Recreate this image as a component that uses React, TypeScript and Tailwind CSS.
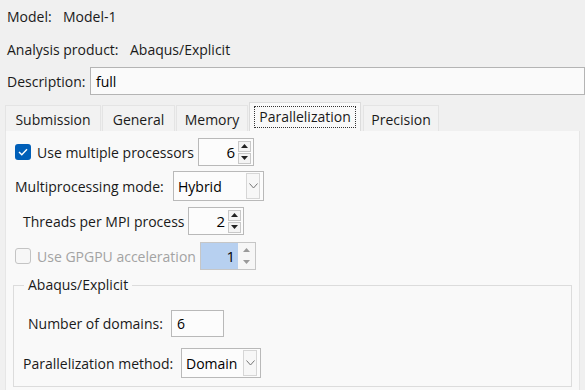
import React from "react"

function Arrows() {
  return (
    <div className="flex flex-col gap-[1px] pr-[2px]">
      <div className="flex h-[11px] w-[13px] items-center justify-center border border-[#c8c8c8] bg-[#f4f4f4]">
        <svg width="7" height="4" viewBox="0 0 7 4"><path d="M0 4 L3.5 0 L7 4 Z" fill="#222" /></svg>
      </div>
      <div className="flex h-[11px] w-[13px] items-center justify-center border border-[#c8c8c8] bg-[#f4f4f4]">
        <svg width="7" height="4" viewBox="0 0 7 4"><path d="M0 0 L3.5 4 L7 0 Z" fill="#222" /></svg>
      </div>
    </div>
  )
}

function DisabledArrows() {
  return (
    <div className="flex h-full flex-col justify-center gap-[1px] bg-[#f6f6f6] px-[2px]">
      <div className="flex h-[11px] w-[13px] items-center justify-center">
        <svg width="7" height="4" viewBox="0 0 7 4"><path d="M0 4 L3.5 0 L7 4 Z" fill="#9a9a9a" /></svg>
      </div>
      <div className="flex h-[11px] w-[13px] items-center justify-center">
        <svg width="7" height="4" viewBox="0 0 7 4"><path d="M0 0 L3.5 4 L7 0 Z" fill="#9a9a9a" /></svg>
      </div>
    </div>
  )
}

function Spin({ value }: { value: string }) {
  return (
    <div className="flex h-[28px] w-[56px] items-center border border-[#b9b9b9] bg-[#fcfcfc]">
      <span className="flex-1 pr-[3px] text-right text-[15px] text-black">{value}</span>
      <Arrows />
    </div>
  )
}

function Combo({ value, width }: { value: string; width: string }) {
  return (
    <div className={`flex h-[30px] items-center border border-[#b9b9b9] bg-[#fcfcfc] ${width}`}>
      <span className="flex-1 pl-[4px] text-black">{value}</span>
      <div className="mr-[3px] flex h-[26px] w-[14px] items-center justify-center border border-[#d6d6d6] bg-[#f7f7f7]">
        <svg width="9" height="6" viewBox="0 0 9 6"><path d="M0.5 0.5 L4.5 5 L8.5 0.5" stroke="#777" strokeWidth="1" fill="none" /></svg>
      </div>
    </div>
  )
}

export default function App() {
  return (
    <div className="h-[390px] w-[585px] overflow-hidden bg-[#f0f0f0] text-[14px] text-[#1a1a1a]" style={{ fontFamily: '"Segoe UI", "Open Sans", sans-serif' }}>
      <div className="flex h-[32px] items-center pl-[7px]">
        <span className="w-[56px]">Model:</span>
        <span>Model-1</span>
      </div>
      <div className="flex h-[34px] items-center pl-[7px]">
        <span className="w-[123px]">Analysis product:</span>
        <span>Abaqus/Explicit</span>
      </div>
      <div className="flex h-[30px] items-center pl-[7px]">
        <span className="w-[83px]">Description:</span>
        <div className="flex h-[28px] flex-1 items-center border border-[#b4b4b4] bg-[#fafafa] pl-[5px] text-black">full</div>
      </div>

      <div className="mt-[7px] flex h-[28px] items-end pl-[5px]">
        <div className="flex h-[26px] w-[96px] items-center justify-center border-x border-t border-[#e4e4e4] bg-[#f2f2f2] pt-[1px]">Submission</div>
        <div className="ml-[1px] flex h-[26px] w-[73px] items-center justify-center border-x border-t border-[#e4e4e4] bg-[#f2f2f2] pt-[1px]">General</div>
        <div className="ml-[1px] flex h-[26px] w-[72px] items-center justify-center border-x border-t border-[#e4e4e4] bg-[#f2f2f2] pt-[1px]">Memory</div>
        <div className="ml-[1px] flex h-[29px] w-[112px] items-center justify-center border-x border-t border-[#dcdcdc] bg-[#f9f9f9]">
          <span className="border border-dotted border-[#333] px-[4px] leading-[20px]">Parallelization</span>
        </div>
        <div className="ml-[2px] flex h-[26px] w-[76px] items-center justify-center border-x border-t border-[#e4e4e4] bg-[#f2f2f2] pt-[1px]">Precision</div>
      </div>

      <div className="ml-[5px] mr-[5px] h-[259px] border-x border-[#e6e6e6] bg-[#f9f9f9]">
        <div className="flex items-center pl-[9px] pt-[7px]">
          <div className="flex h-[16px] w-[16px] items-center justify-center rounded-[3px] bg-[#005fb8]">
            <svg width="10" height="8" viewBox="0 0 10 8"><path d="M1 4 L3.8 6.8 L9 1.2" stroke="#fff" strokeWidth="1.4" fill="none" /></svg>
          </div>
          <span className="ml-[6px] w-[161px]">Use multiple processors</span>
          <Spin value="6" />
        </div>

        <div className="mt-[5px] flex items-center pl-[9px]">
          <span className="w-[158px]">Multiprocessing mode:</span>
          <Combo value="Hybrid" width="w-[91px]" />
        </div>

        <div className="mt-[6px] flex items-center pl-[17px]">
          <span className="w-[165px]">Threads per MPI process</span>
          <Spin value="2" />
        </div>

        <div className="mt-[7px] flex items-center pl-[9px]">
          <div className="h-[16px] w-[16px] rounded-[3px] border border-[#c4c4c4] bg-[#f7f7f7]" />
          <span className="ml-[6px] w-[163px] text-[#a3a3a3]">Use GPGPU acceleration</span>
          <div className="flex h-[28px] w-[56px] items-center border border-[#c6c6c6] bg-[#b7d0f0]">
            <span className="flex-1 pr-[3px] text-right text-[15px] text-black">1</span>
            <DisabledArrows />
          </div>
        </div>

        <div className="relative mx-[7px] mt-[15px] h-[102px] border border-[#dcdcdc]">
          <div className="absolute left-[10px] top-[-11px] bg-[#f9f9f9] px-[4px] leading-[20px]">Abaqus/Explicit</div>
          <div className="mt-[24px] flex items-center pl-[14px]">
            <span className="w-[143px]">Number of domains:</span>
            <div className="flex h-[27px] w-[53px] items-center border border-[#b9b9b9] bg-[#fcfcfc] pl-[5px] text-black">6</div>
          </div>
          <div className="mt-[11px] flex items-center pl-[9px]">
            <span className="w-[158px]">Parallelization method:</span>
            <Combo value="Domain" width="w-[80px]" />
          </div>
        </div>
      </div>
    </div>
  )
}
